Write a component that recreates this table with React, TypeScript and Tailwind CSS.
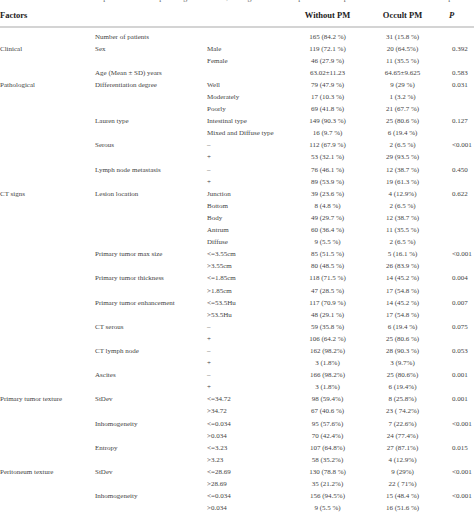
type Row = [string, string, string, string, string, string];

const rows: Row[] = [
  ["", "Number of patients", "", "165 (84.2 %)", "31 (15.8 %)", ""],
  ["Clinical", "Sex", "Male", "119 (72.1 %)", "20 (64.5%)", "0.392"],
  ["", "", "Female", "46 (27.9 %)", "11 (35.5 %)", ""],
  ["", "Age (Mean ± SD) years", "", "63.02±11.23", "64.65±9.625", "0.583"],
  ["Pathological", "Differentiation degree", "Well", "79 (47.9 %)", "9 (29 %)", "0.031"],
  ["", "", "Moderately", "17 (10.3 %)", "1 (3.2 %)", ""],
  ["", "", "Poorly", "69 (41.8 %)", "21 (67.7 %)", ""],
  ["", "Lauren type", "Intestinal type", "149 (90.3 %)", "25 (80.6 %)", "0.127"],
  ["", "", "Mixed and Diffuse type", "16 (9.7 %)", "6 (19.4 %)", ""],
  ["", "Serous", "–", "112 (67.9 %)", "2 (6.5 %)", "<0.001"],
  ["", "", "+", "53 (32.1 %)", "29 (93.5 %)", ""],
  ["", "Lymph node metastasis", "–", "76 (46.1 %)", "12 (38.7 %)", "0.450"],
  ["", "", "+", "89 (53.9 %)", "19 (61.3 %)", ""],
  ["CT signs", "Lesion location", "Junction", "39 (23.6 %)", "4 (12.9%)", "0.622"],
  ["", "", "Bottom", "8 (4.8 %)", "2 (6.5 %)", ""],
  ["", "", "Body", "49 (29.7 %)", "12 (38.7 %)", ""],
  ["", "", "Antrum", "60 (36.4 %)", "11 (35.5 %)", ""],
  ["", "", "Diffuse", "9 (5.5 %)", "2 (6.5 %)", ""],
  ["", "Primary tumor max size", "<=3.55cm", "85 (51.5 %)", "5 (16.1 %)", "<0.001"],
  ["", "", ">3.55cm", "80 (48.5 %)", "26 (83.9 %)", ""],
  ["", "Primary tumor thickness", "<=1.85cm", "118 (71.5 %)", "14 (45.2 %)", "0.004"],
  ["", "", ">1.85cm", "47 (28.5 %)", "17 (54.8 %)", ""],
  ["", "Primary tumor enhancement", "<=53.5Hu", "117 (70.9 %)", "14 (45.2 %)", "0.007"],
  ["", "", ">53.5Hu", "48 (29.1 %)", "17 (54.8 %)", ""],
  ["", "CT serous", "–", "59 (35.8 %)", "6 (19.4 %)", "0.075"],
  ["", "", "+", "106 (64.2 %)", "25 (80.6 %)", ""],
  ["", "CT lymph node", "–", "162 (98.2%)", "28 (90.3 %)", "0.053"],
  ["", "", "+", "3 (1.8%)", "3 (9.7%)", ""],
  ["", "Ascites", "–", "166 (98.2%)", "25 (80.6%)", "0.001"],
  ["", "", "+", "3 (1.8%)", "6 (19.4%)", ""],
  ["Primary tumor texture", "StDev", "<=34.72", "98 (59.4%)", "8 (25.8%)", "0.001"],
  ["", "", ">34.72", "67 (40.6 %)", "23 ( 74.2%)", ""],
  ["", "Inhomogeneity", "<=0.034", "95 (57.6%)", "7 (22.6%)", "<0.001"],
  ["", "", ">0.034", "70 (42.4%)", "24 (77.4%)", ""],
  ["", "Entropy", "<=3.23", "107 (64.8%)", "27 (87.1%)", "0.015"],
  ["", "", ">3.23", "58 (35.2%)", "4 (12.9%)", ""],
  ["Peritoneum texture", "StDev", "<=28.69", "130 (78.8 %)", "9 (29%)", "<0.001"],
  ["", "", ">28.69", "35 (21.2%)", "22 ( 71%)", ""],
  ["", "Inhomogeneity", "<=0.034", "156 (94.5%)", "15 (48.4 %)", "<0.001"],
  ["", "", ">0.034", "9 (5.5 %)", "16 (51.6 %)", ""],
];

const grid = "grid grid-cols-[95px_112px_83px_75px_75px_34px] items-center";

const App = () => {
  return (
    <div
      className="h-[521px] w-[474px] overflow-hidden bg-white text-[#444]"
      style={{ fontFamily: '"Liberation Serif", "Times New Roman", serif' }}
    >
      {/* caption, cut off at the top of the shot */}
      <div className="h-[4px] overflow-hidden">
        <div className="-mt-[7px] whitespace-nowrap pl-[62px] text-[8px] leading-[10px] text-[#666]">
          Table 2 Comparison of clinicopathological features, CT signs and texture parameters in patients with and without occult peritoneal metastasis.
        </div>
      </div>

      <div className={`${grid} h-[22px] text-[8.5px] font-bold text-[#222]`}>
        <div>Factors</div>
        <div />
        <div />
        <div className="text-center">Without PM</div>
        <div className="text-center">Occult PM</div>
        <div className="pl-[9px] italic">P</div>
      </div>
      <div className="h-[2px] bg-[#d4d4d4]" />

      <div className="mt-[3px]">
        {rows.map((r, i) => (
          <div
            key={i}
            className={`${grid} h-[12.1px] whitespace-nowrap text-[7px] leading-none`}
          >
            <div>{r[0]}</div>
            <div>{r[1]}</div>
            <div>{r[2]}</div>
            <div className="text-center">{r[3]}</div>
            <div className="text-center">{r[4]}</div>
            <div className="pl-[12px]">{r[5]}</div>
          </div>
        ))}
      </div>
    </div>
  );
};

export default App;
